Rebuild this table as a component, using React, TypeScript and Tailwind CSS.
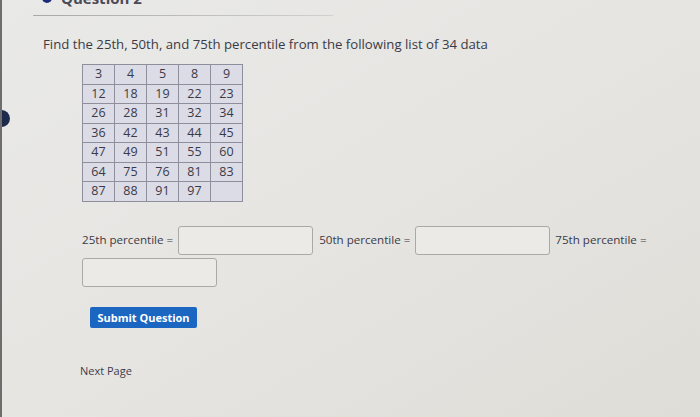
const DATA: (number | null)[][] = [
  [3, 4, 5, 8, 9],
  [12, 18, 19, 22, 23],
  [26, 28, 31, 32, 34],
  [36, 42, 43, 44, 45],
  [47, 49, 51, 55, 60],
  [64, 75, 76, 81, 83],
  [87, 88, 91, 97, null],
];

const AnswerBox = () => (
  <input
    type="text"
    className="w-[135px] h-[29px] rounded-[3px] border border-[#a9a9a9] bg-[#ebeae7] outline-none"
  />
);

const App = () => {
  return (
    <div className="relative w-[700px] h-[417px] overflow-hidden border-l-2 border-[#6d6d6d] bg-linear-to-br from-[#e9e9e7] via-[#e6e5e2] to-[#dfddd7] font-['Open_Sans',sans-serif] text-[#3b3b46]">
      {/* cut off nav circle on the left edge */}
      <div className="absolute left-[-9px] top-[110px] w-[17px] h-[17px] rounded-full bg-[#1d2a4b]" />

      <div className="flex items-center gap-[9px] pl-[40px] -mt-[12px] h-[20px]">
        <span className="w-[10px] h-[10px] rounded-full bg-[#1b2b7a]" />
        <span className="text-[15px] font-bold text-[#4a4a58]">Question 2</span>
      </div>
      <div className="ml-[31px] mt-[7px] w-[300px] h-px bg-linear-to-r from-[#a9a9a9] to-[#d0d0ce]" />

      <p className="ml-[41px] mt-[20px] text-[13.2px] leading-[16px] font-medium">
        Find the 25th, 50th, and 75th percentile from the following list of 34 data
      </p>

      <table className="ml-[80px] mt-[12px] border-collapse bg-[#dcdce6] text-[12.5px] text-[#3a3a46]">
        <tbody>
          {DATA.map((row, i) => (
            <tr key={i}>
              {row.map((v, j) => (
                <td
                  key={j}
                  className="w-[32px] h-[19.5px] p-0 text-center leading-[18px] border border-[#8e8e9c]"
                >
                  {v ?? ""}
                </td>
              ))}
            </tr>
          ))}
        </tbody>
      </table>

      <div className="ml-[80px] mt-[24px] w-[610px] flex flex-wrap items-center gap-x-[5px] gap-y-[3px] text-[11.6px]">
        <span>25th percentile =</span>
        <AnswerBox />
        <span className="ml-[1px]">50th percentile =</span>
        <AnswerBox />
        <span>75th percentile =</span>
        <AnswerBox />
      </div>

      <button className="ml-[88px] mt-[20px] w-[107px] h-[21px] rounded-[2px] bg-[#1b66c0] text-[11px] font-bold text-white leading-[21px]">
        Submit Question
      </button>

      <p className="ml-[78px] mt-[35px] text-[11px] text-[#3c3c4c]">Next Page</p>
    </div>
  );
};

export default App;
